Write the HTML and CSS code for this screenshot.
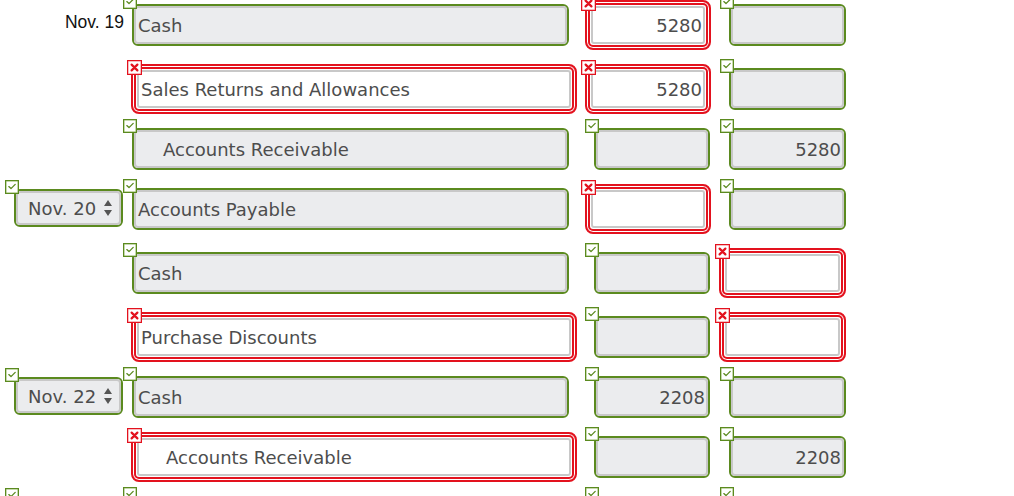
FILE: index.html
```html
<!DOCTYPE html>
<html>
<head>
<meta charset="utf-8">
<link rel="stylesheet" href="styles.css">
</head>
<body>
<div class="journal">

  <div class="row">
    <div class="date-label">Nov. 19</div>
    <div class="field ok acct"><span class="mark"><svg viewBox="0 0 14 14"><path class="chk" d="M3.8 6.6 L6 8.6 L10.2 4.4"/></svg></span><div class="input">Cash</div></div>
    <div class="field bad amt debit"><span class="mark"><svg viewBox="0 0 15 15"><path class="x" d="M4.6 4.6 L10.4 10.4 M10.4 4.6 L4.6 10.4"/></svg></span><div class="input num">5280</div></div>
    <div class="field ok amt credit"><span class="mark"><svg viewBox="0 0 14 14"><path class="chk" d="M3.8 6.6 L6 8.6 L10.2 4.4"/></svg></span><div class="input num"></div></div>
  </div>

  <div class="row">
    <div class="date-empty"></div>
    <div class="field bad acct"><span class="mark"><svg viewBox="0 0 15 15"><path class="x" d="M4.6 4.6 L10.4 10.4 M10.4 4.6 L4.6 10.4"/></svg></span><div class="input">Sales Returns and Allowances</div></div>
    <div class="field bad amt debit"><span class="mark"><svg viewBox="0 0 15 15"><path class="x" d="M4.6 4.6 L10.4 10.4 M10.4 4.6 L4.6 10.4"/></svg></span><div class="input num">5280</div></div>
    <div class="field ok amt credit"><span class="mark"><svg viewBox="0 0 14 14"><path class="chk" d="M3.8 6.6 L6 8.6 L10.2 4.4"/></svg></span><div class="input num"></div></div>
  </div>

  <div class="row">
    <div class="date-empty"></div>
    <div class="field ok acct"><span class="mark"><svg viewBox="0 0 14 14"><path class="chk" d="M3.8 6.6 L6 8.6 L10.2 4.4"/></svg></span><div class="input indent">Accounts Receivable</div></div>
    <div class="field ok amt debit"><span class="mark"><svg viewBox="0 0 14 14"><path class="chk" d="M3.8 6.6 L6 8.6 L10.2 4.4"/></svg></span><div class="input num"></div></div>
    <div class="field ok amt credit"><span class="mark"><svg viewBox="0 0 14 14"><path class="chk" d="M3.8 6.6 L6 8.6 L10.2 4.4"/></svg></span><div class="input num">5280</div></div>
  </div>

  <div class="row">
    <div class="field ok select"><span class="mark"><svg viewBox="0 0 14 14"><path class="chk" d="M3.8 6.6 L6 8.6 L10.2 4.4"/></svg></span><div class="input sel">Nov. 20<svg class="spin" viewBox="0 0 10 18"><path d="M5 1 L9 7 L1 7 Z M1 11 L9 11 L5 17 Z"/></svg></div></div>
    <div class="field ok acct"><span class="mark"><svg viewBox="0 0 14 14"><path class="chk" d="M3.8 6.6 L6 8.6 L10.2 4.4"/></svg></span><div class="input">Accounts Payable</div></div>
    <div class="field bad amt debit"><span class="mark"><svg viewBox="0 0 15 15"><path class="x" d="M4.6 4.6 L10.4 10.4 M10.4 4.6 L4.6 10.4"/></svg></span><div class="input num"></div></div>
    <div class="field ok amt credit"><span class="mark"><svg viewBox="0 0 14 14"><path class="chk" d="M3.8 6.6 L6 8.6 L10.2 4.4"/></svg></span><div class="input num"></div></div>
  </div>

  <div class="row">
    <div class="date-empty"></div>
    <div class="field ok acct"><span class="mark"><svg viewBox="0 0 14 14"><path class="chk" d="M3.8 6.6 L6 8.6 L10.2 4.4"/></svg></span><div class="input">Cash</div></div>
    <div class="field ok amt debit"><span class="mark"><svg viewBox="0 0 14 14"><path class="chk" d="M3.8 6.6 L6 8.6 L10.2 4.4"/></svg></span><div class="input num"></div></div>
    <div class="field bad amt credit"><span class="mark"><svg viewBox="0 0 15 15"><path class="x" d="M4.6 4.6 L10.4 10.4 M10.4 4.6 L4.6 10.4"/></svg></span><div class="input num"></div></div>
  </div>

  <div class="row">
    <div class="date-empty"></div>
    <div class="field bad acct"><span class="mark"><svg viewBox="0 0 15 15"><path class="x" d="M4.6 4.6 L10.4 10.4 M10.4 4.6 L4.6 10.4"/></svg></span><div class="input">Purchase Discounts</div></div>
    <div class="field ok amt debit"><span class="mark"><svg viewBox="0 0 14 14"><path class="chk" d="M3.8 6.6 L6 8.6 L10.2 4.4"/></svg></span><div class="input num"></div></div>
    <div class="field bad amt credit"><span class="mark"><svg viewBox="0 0 15 15"><path class="x" d="M4.6 4.6 L10.4 10.4 M10.4 4.6 L4.6 10.4"/></svg></span><div class="input num"></div></div>
  </div>

  <div class="row">
    <div class="field ok select"><span class="mark"><svg viewBox="0 0 14 14"><path class="chk" d="M3.8 6.6 L6 8.6 L10.2 4.4"/></svg></span><div class="input sel">Nov. 22<svg class="spin" viewBox="0 0 10 18"><path d="M5 1 L9 7 L1 7 Z M1 11 L9 11 L5 17 Z"/></svg></div></div>
    <div class="field ok acct"><span class="mark"><svg viewBox="0 0 14 14"><path class="chk" d="M3.8 6.6 L6 8.6 L10.2 4.4"/></svg></span><div class="input">Cash</div></div>
    <div class="field ok amt debit"><span class="mark"><svg viewBox="0 0 14 14"><path class="chk" d="M3.8 6.6 L6 8.6 L10.2 4.4"/></svg></span><div class="input num">2208</div></div>
    <div class="field ok amt credit"><span class="mark"><svg viewBox="0 0 14 14"><path class="chk" d="M3.8 6.6 L6 8.6 L10.2 4.4"/></svg></span><div class="input num"></div></div>
  </div>

  <div class="row">
    <div class="date-empty"></div>
    <div class="field bad acct"><span class="mark"><svg viewBox="0 0 15 15"><path class="x" d="M4.6 4.6 L10.4 10.4 M10.4 4.6 L4.6 10.4"/></svg></span><div class="input indent">Accounts Receivable</div></div>
    <div class="field ok amt debit"><span class="mark"><svg viewBox="0 0 14 14"><path class="chk" d="M3.8 6.6 L6 8.6 L10.2 4.4"/></svg></span><div class="input num"></div></div>
    <div class="field ok amt credit"><span class="mark"><svg viewBox="0 0 14 14"><path class="chk" d="M3.8 6.6 L6 8.6 L10.2 4.4"/></svg></span><div class="input num">2208</div></div>
  </div>

  <div class="row">
    <div class="field ok select"><span class="mark"><svg viewBox="0 0 14 14"><path class="chk" d="M3.8 6.6 L6 8.6 L10.2 4.4"/></svg></span><div class="input sel"><span></span><svg class="spin" viewBox="0 0 10 18"><path d="M5 1 L9 7 L1 7 Z M1 11 L9 11 L5 17 Z"/></svg></div></div>
    <div class="field ok acct"><span class="mark"><svg viewBox="0 0 14 14"><path class="chk" d="M3.8 6.6 L6 8.6 L10.2 4.4"/></svg></span><div class="input"></div></div>
    <div class="field ok amt debit"><span class="mark"><svg viewBox="0 0 14 14"><path class="chk" d="M3.8 6.6 L6 8.6 L10.2 4.4"/></svg></span><div class="input num"></div></div>
    <div class="field ok amt credit"><span class="mark"><svg viewBox="0 0 14 14"><path class="chk" d="M3.8 6.6 L6 8.6 L10.2 4.4"/></svg></span><div class="input num"></div></div>
  </div>

</div>
</body>
</html>
```

FILE: styles.css
```css
html, body {
  margin: 0;
  padding: 0;
  background: #ffffff;
  overflow: hidden;
}

.journal {
  display: flex;
  flex-direction: column;
  gap: 14px;
  margin-top: 0;
}

.row {
  display: grid;
  grid-template-columns: 124px 447px 126px 128px;
  column-gap: 7px;
  align-items: center;
}

.date-label {
  align-self: start;
  justify-self: end;
  padding-top: 12px;
  font-family: "Liberation Sans", Arial, sans-serif;
  font-size: 17.5px;
  line-height: 20px;
  color: #111;
}

.field {
  position: relative;
  box-sizing: border-box;
}

.field.ok {
  border: 2px solid #5b8a1f;
  border-radius: 6px;
}

.field.bad {
  border: 2px solid #e3121e;
  border-radius: 8px;
  padding: 4px;
  background: #fff;
  box-shadow: inset 0 0 0 1px #fff, inset 0 0 0 3px #e3121e;
}

.input {
  box-sizing: border-box;
  height: 38px;
  border: 2px solid #c8c8c8;
  border-radius: 4px;
  background: #ebecee;
  font-family: "DejaVu Sans", Verdana, sans-serif;
  font-size: 18px;
  color: #4d4d4d;
  display: flex;
  align-items: center;
  padding: 0 2px;
  white-space: nowrap;
  overflow: hidden;
}

.bad .input {
  background: #fff;
  border-radius: 3px;
}

.input.indent {
  padding-left: 27px;
}

.input.num {
  justify-content: flex-end;
  padding-right: 1px;
}

.acct {
  justify-self: start;
}
.acct.ok {
  width: 437px;
  margin-left: 1px;
}
.acct.bad {
  width: 446px;
}

.amt {
  justify-self: end;
}
.debit.ok { width: 116px; margin-right: 1px; }
.debit.bad { width: 126px; }
.credit.ok { width: 117px; }
.credit.bad { width: 127px; }

.select {
  justify-self: end;
  width: 109px;
  margin-right: 1px;
  margin-bottom: 2px;
}

.select .input {
  height: 34px;
  padding: 0 6px 0 10px;
  justify-content: space-between;
}

.spin {
  width: 10px;
  height: 18px;
  fill: #555;
}

.mark {
  position: absolute;
  left: -11px;
  top: -11px;
  width: 14px;
  height: 14px;
  box-sizing: border-box;
  background: #fff;
  border: 1px solid #5b8a1f;
  box-shadow: inset 0 0 0 0.5px #8db35a;
  display: block;
}

.mark svg {
  position: absolute;
  left: -1px;
  top: -1px;
  width: 14px;
  height: 14px;
}

.bad > .mark {
  left: -6px;
  top: -6px;
  width: 15px;
  height: 15px;
  border-color: #e3121e;
  box-shadow: inset 0 0 0 0.5px #f07a80;
}

.bad > .mark svg {
  width: 15px;
  height: 15px;
}

.chk {
  fill: none;
  stroke: #5b8a1f;
  stroke-width: 1.3;
  stroke-linecap: round;
  stroke-linejoin: round;
}

.x {
  fill: none;
  stroke: #e3121e;
  stroke-width: 2.2;
  stroke-linecap: round;
}
```
